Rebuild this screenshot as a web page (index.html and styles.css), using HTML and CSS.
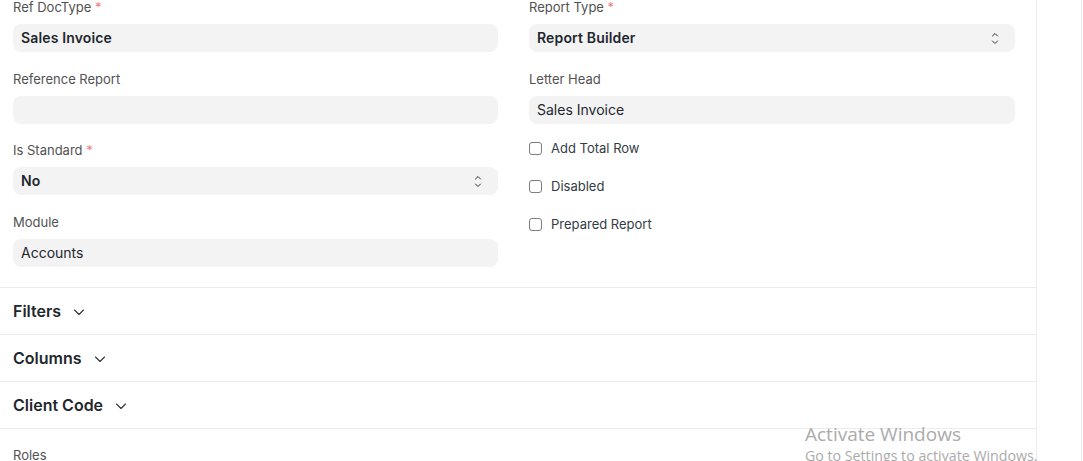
FILE: index.html
```html
<!DOCTYPE html>
<html lang="en">
<head>
    <meta charset="UTF-8">
    <meta name="viewport" content="width=device-width, initial-scale=1.0">
    <title>Report</title>
    <link rel="stylesheet" href="styles.css">
</head>
<body>
    <div class="page">
        <div class="form-card">
            <div class="form-section">
                <div class="column">
                    <div class="field">
                        <label class="field-label">Ref DocType <span class="req">*</span></label>
                        <div class="control bold">Sales Invoice</div>
                    </div>
                    <div class="field">
                        <label class="field-label">Reference Report</label>
                        <div class="control"></div>
                    </div>
                    <div class="field">
                        <label class="field-label">Is Standard <span class="req">*</span></label>
                        <div class="control select bold">No
                            <svg class="select-arrows" width="8" height="13" viewBox="0 0 8 13"><path d="M1.5 4 L4 1.5 L6.5 4 M1.5 9 L4 11.5 L6.5 9" fill="none" stroke="#333" stroke-width="1" stroke-linecap="round" stroke-linejoin="round"/></svg>
                        </div>
                    </div>
                    <div class="field last">
                        <label class="field-label">Module</label>
                        <div class="control">Accounts</div>
                    </div>
                </div>
                <div class="column">
                    <div class="field">
                        <label class="field-label">Report Type <span class="req">*</span></label>
                        <div class="control select bold">Report Builder
                            <svg class="select-arrows" width="8" height="13" viewBox="0 0 8 13"><path d="M1.5 4 L4 1.5 L6.5 4 M1.5 9 L4 11.5 L6.5 9" fill="none" stroke="#333" stroke-width="1" stroke-linecap="round" stroke-linejoin="round"/></svg>
                        </div>
                    </div>
                    <div class="field">
                        <label class="field-label">Letter Head</label>
                        <div class="control">Sales Invoice</div>
                    </div>
                    <div class="checks">
                        <label class="check"><span class="box"></span>Add Total Row</label>
                        <label class="check"><span class="box"></span>Disabled</label>
                        <label class="check"><span class="box"></span>Prepared Report</label>
                    </div>
                </div>
            </div>

            <div class="collapse-section">
                <span class="section-title">Filters</span>
                <svg class="chevron" width="12" height="12" viewBox="0 0 12 12"><path d="M1.5 4 L6 8.5 L10.5 4" fill="none" stroke="#333" stroke-width="1.1" stroke-linecap="round" stroke-linejoin="round"/></svg>
            </div>
            <div class="collapse-section">
                <span class="section-title">Columns</span>
                <svg class="chevron" width="12" height="12" viewBox="0 0 12 12"><path d="M1.5 4 L6 8.5 L10.5 4" fill="none" stroke="#333" stroke-width="1.1" stroke-linecap="round" stroke-linejoin="round"/></svg>
            </div>
            <div class="collapse-section">
                <span class="section-title">Client Code</span>
                <svg class="chevron" width="12" height="12" viewBox="0 0 12 12"><path d="M1.5 4 L6 8.5 L10.5 4" fill="none" stroke="#333" stroke-width="1.1" stroke-linecap="round" stroke-linejoin="round"/></svg>
            </div>
            <div class="roles-section">
                <label class="field-label">Roles</label>
            </div>
        </div>
        <div class="side-gutter"></div>
    </div>

    <div class="activate">
        <div class="activate-title">Activate Windows</div>
        <div class="activate-sub">Go to Settings to activate Windows.</div>
    </div>
</body>
</html>
```

FILE: styles.css
```css
* {
    margin: 0;
    padding: 0;
    box-sizing: border-box;
}

body {
    font-family: Inter, 'Noto Sans', sans-serif;
    background: #fff;
    color: #1f272e;
    height: 461px;
    overflow: hidden;
}

.page {
    display: flex;
    height: 100%;
}

.form-card {
    width: 1037px;
    border-right: 1px solid #ececec;
}

.side-gutter {
    width: 45px;
    border-right: 1px solid #ebebeb;
}

.form-section {
    display: grid;
    grid-template-columns: 485px 486px;
    column-gap: 31px;
    padding: 0 21px 20px 13px;
}

.field {
    margin-bottom: 19.67px;
}

.field.last {
    margin-bottom: 0;
}

.field-label {
    display: block;
    font-size: 13px;
    line-height: 14px;
    color: #525252;
    margin-bottom: 10px;
}

.req {
    color: #f08080;
}

.control {
    position: relative;
    height: 28px;
    background: #f3f3f3;
    border-radius: 8px;
    padding: 0 8px;
    font-size: 14px;
    line-height: 28px;
    color: #1f272e;
}

.control.bold {
    font-weight: 600;
    letter-spacing: 0.15px;
}

.select-arrows {
    position: absolute;
    right: 16px;
    top: 8px;
}

.checks {
    margin-top: -2px;
}

.check {
    display: flex;
    align-items: center;
    height: 14px;
    margin-bottom: 24px;
    font-size: 13px;
    color: #333c44;
}

.box {
    width: 13px;
    height: 13px;
    border: 1px solid #7d7d7d;
    border-radius: 3px;
    margin-right: 9px;
    background: #fff;
}

.collapse-section {
    display: flex;
    align-items: center;
    height: 47px;
    border-top: 1px solid #ececec;
    padding-left: 13px;
}

.section-title {
    font-size: 16px;
    font-weight: 600;
    color: #1f272e;
}

.chevron {
    margin-left: 12px;
    margin-top: 3px;
}

.roles-section {
    border-top: 1px solid #ececec;
    padding: 19px 13px 0;
}

.activate {
    position: absolute;
    left: 805px;
    top: 421px;
    font-family: 'Open Sans', 'Noto Sans', sans-serif;
    color: #ababab;
    white-space: nowrap;
}

.activate-title {
    font-size: 19px;
    line-height: 26px;
}

.activate-sub {
    font-size: 14.2px;
    line-height: 18px;
}
```
